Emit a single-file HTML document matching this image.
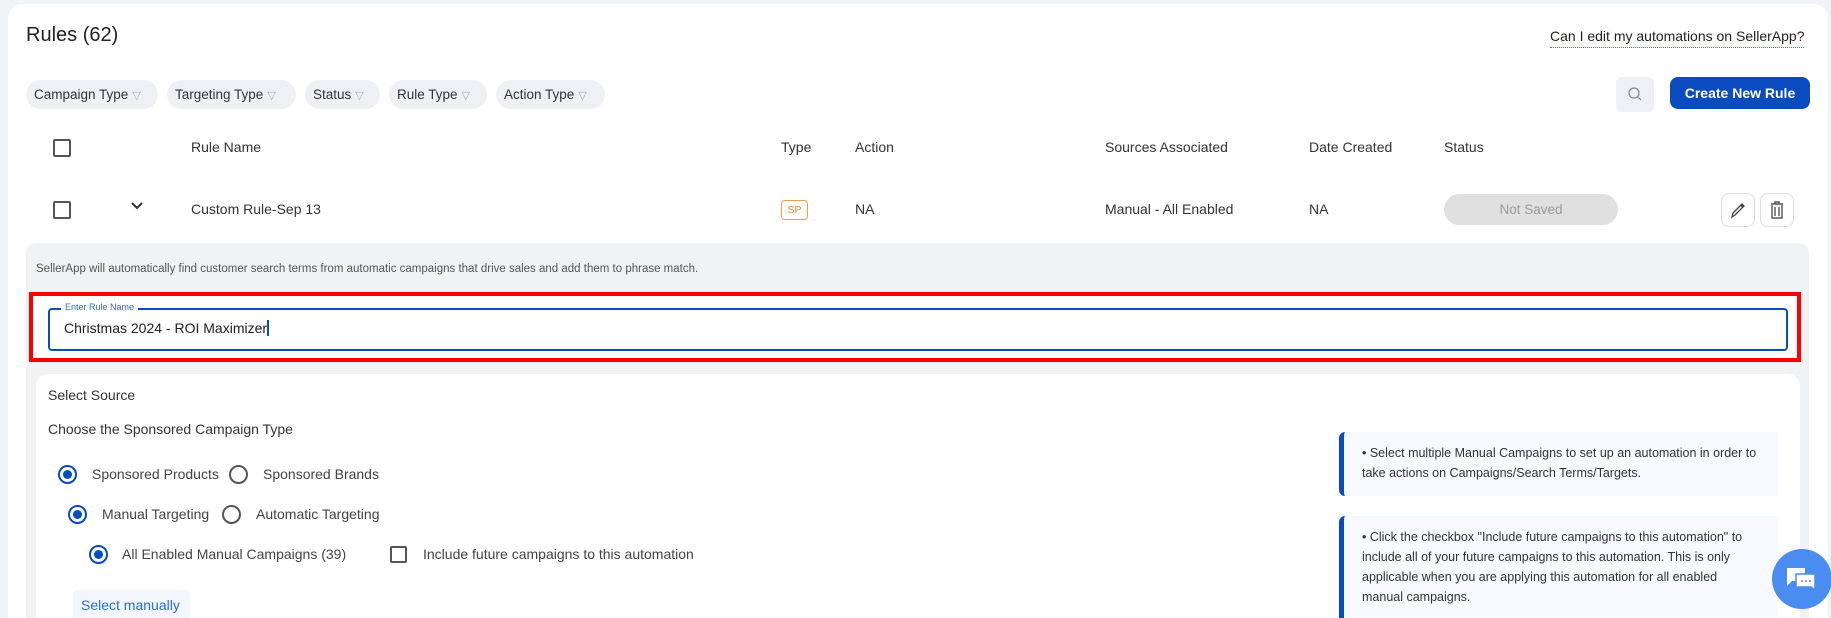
<!DOCTYPE html>
<html><head><meta charset="utf-8"><style>
*{box-sizing:border-box;margin:0;padding:0}
html,body{width:1831px;height:618px;overflow:hidden}
body{background:#f1f3f6;font-family:"Liberation Sans",sans-serif;color:#333;position:relative}
.a{position:absolute;white-space:nowrap}
.card{position:absolute;left:8px;top:4px;width:1820px;height:614px;background:#fff;border-radius:14px 14px 0 0}
.chip{position:absolute;top:80px;height:29px;background:#eff0f3;border-radius:15px;font-size:13.5px;line-height:29px;padding-left:8px;color:#333}
.chip span{color:#aaa;font-size:11px;margin-left:4px}
.cb{position:absolute;width:18px;height:18px;border:2px solid #555;border-radius:2px;background:#fff}
.h{font-size:14px;top:139px}
.r{font-size:14px;top:201px}
.radio{position:absolute;width:19px;height:19px;border-radius:50%;border:2px solid #555;background:#fff}
.radio.on{border-color:#0a4bbf}
.radio.on::after{content:"";position:absolute;left:3px;top:3px;width:9px;height:9px;border-radius:50%;background:#0a4bbf}
.t14{font-size:14px}
.info{position:absolute;background:#f7f9fe;border-left:5px solid #0a4bbf;border-radius:6px 0 0 6px;font-size:12.5px;line-height:20px;padding:11px 20px 0 18px;color:#333;white-space:normal}
</style></head><body>
<div class="card"></div>
<div class="a" style="left:26px;top:24px;font-size:20px;color:#222">Rules (62)</div>
<div class="a" style="left:1550px;top:28px;font-size:14px;color:#222;border-bottom:1px dotted #2a7de1;padding-bottom:3px">Can I edit my automations on SellerApp?</div>

<div class="chip" style="left:26px;width:132px">Campaign Type<span>▽</span></div>
<div class="chip" style="left:167px;width:129px">Targeting Type<span>▽</span></div>
<div class="chip" style="left:305px;width:75px">Status<span>▽</span></div>
<div class="chip" style="left:389px;width:98px">Rule Type<span>▽</span></div>
<div class="chip" style="left:496px;width:109px">Action Type<span>▽</span></div>

<div class="a" style="left:1616px;top:77px;width:38px;height:35px;background:#eff0f3;border-radius:6px">
<svg width="38" height="35" viewBox="0 0 38 35"><circle cx="18" cy="16" r="5" fill="none" stroke="#888" stroke-width="1.2"/><line x1="21.5" y1="19.5" x2="25" y2="23" stroke="#888" stroke-width="1.2"/></svg></div>
<div class="a" style="left:1670px;top:77px;width:140px;height:32px;background:#0a4bbf;border-radius:8px;color:#fff;font-size:14px;font-weight:bold;text-align:center;line-height:32px">Create New Rule</div>

<div class="cb" style="left:53px;top:139px"></div>
<div class="a h" style="left:191px">Rule Name</div>
<div class="a h" style="left:781px">Type</div>
<div class="a h" style="left:855px">Action</div>
<div class="a h" style="left:1105px">Sources Associated</div>
<div class="a h" style="left:1309px">Date Created</div>
<div class="a h" style="left:1444px">Status</div>

<div class="cb" style="left:53px;top:201px"></div>
<svg class="a" style="left:130px;top:201px" width="14" height="10" viewBox="0 0 14 10"><path d="M2 2 L7 7 L12 2" fill="none" stroke="#333" stroke-width="2"/></svg>
<div class="a r" style="left:191px">Custom Rule-Sep 13</div>
<div class="a" style="left:781px;top:200px;width:27px;height:20px;border:1px solid #e8a050;border-radius:4px;color:#e08a30;font-size:10.5px;text-align:center;line-height:18px">SP</div>
<div class="a r" style="left:855px">NA</div>
<div class="a r" style="left:1105px">Manual - All Enabled</div>
<div class="a r" style="left:1309px">NA</div>
<div class="a" style="left:1444px;top:194px;width:174px;height:31px;background:#e0e0e0;border-radius:16px;color:#999;font-size:13.5px;text-align:center;line-height:31px">Not Saved</div>
<div class="a" style="left:1721px;top:193px;width:34px;height:34px;border:1px solid #ddd;border-radius:8px">
<svg width="32" height="32" viewBox="0 0 32 32"><path d="M10 23 L11 19 L20 10 L22 12 L13 21 Z" fill="none" stroke="#444" stroke-width="1.3"/><path d="M19 11 L21 13" stroke="#444" stroke-width="2"/></svg></div>
<div class="a" style="left:1760px;top:193px;width:34px;height:34px;border:1px solid #ddd;border-radius:8px">
<svg width="32" height="32" viewBox="0 0 32 32"><path d="M10 10 H22 M14 10 V8 H18 V10 M11 11 V24 H21 V11 M14 13 V22 M18 13 V22" fill="none" stroke="#555" stroke-width="1.4"/></svg></div>

<div class="a" style="left:26px;top:243px;width:1783px;height:375px;background:#f1f2f4;border-radius:10px 10px 0 0"></div>
<div class="a" style="left:36px;top:263px;font-size:11.5px;color:#555">SellerApp will automatically find customer search terms from automatic campaigns that drive sales and add them to phrase match.</div>
<div class="a" style="left:29px;top:292px;width:1772px;height:70px;border:4px solid #f00;background:#fff"></div>
<div class="a" style="left:48px;top:308px;width:1740px;height:43px;border:2px solid #0a4bbf;border-radius:4px;background:#fff"></div>
<div class="a" style="left:61px;top:302px;font-size:9px;color:#2a6de1;background:#fff;padding:0 4px">Enter Rule Name</div>
<div class="a" style="left:64px;top:320px;font-size:14px;color:#222">Christmas 2024 - ROI Maximizer<span style="display:inline-block;width:2px;height:16px;background:#0a4bbf;vertical-align:-3px"></span></div>

<div class="a" style="left:36px;top:374px;width:1764px;height:244px;background:#fff;border-radius:12px 12px 0 0"></div>
<div class="a t14" style="left:48px;top:387px">Select Source</div>
<div class="a t14" style="left:48px;top:421px">Choose the Sponsored Campaign Type</div>

<div class="radio on" style="left:58px;top:465px"></div>
<div class="a t14" style="left:92px;top:466px;color:#444">Sponsored Products</div>
<div class="radio" style="left:229px;top:465px"></div>
<div class="a t14" style="left:263px;top:466px;color:#444">Sponsored Brands</div>

<div class="radio on" style="left:68px;top:505px"></div>
<div class="a t14" style="left:102px;top:506px;color:#444">Manual Targeting</div>
<div class="radio" style="left:222px;top:505px"></div>
<div class="a t14" style="left:256px;top:506px;color:#444">Automatic Targeting</div>

<div class="radio on" style="left:89px;top:545px"></div>
<div class="a t14" style="left:122px;top:546px;color:#444">All Enabled Manual Campaigns (39)</div>
<div class="cb" style="left:390px;top:546px;width:17px;height:17px"></div>
<div class="a t14" style="left:423px;top:546px;color:#444">Include future campaigns to this automation</div>

<div class="a" style="left:73px;top:590px;width:117px;height:28px;background:#f3f6fc;border-radius:4px 4px 0 0;color:#2a6de1;font-size:14px;line-height:30px;padding-left:8px">Select manually</div>

<div class="info" style="left:1339px;top:432px;width:439px;height:64px">• Select multiple Manual Campaigns to set up an automation in order to take actions on Campaigns/Search Terms/Targets.</div>
<div class="info" style="left:1339px;top:516px;width:439px;height:102px;border-radius:6px 0 0 0">• Click the checkbox "Include future campaigns to this automation" to include all of your future campaigns to this automation. This is only applicable when you are applying this automation for all enabled manual campaigns.</div>

<div class="a" style="left:1772px;top:549px;width:60px;height:60px;border-radius:50%;background:#4a8cf0">
<svg width="60" height="60" viewBox="0 0 60 60"><path d="M15 19 H33 V32 H20 L15 37 Z" fill="#fff"/><path d="M24 25 H43 V41 L39 38 H24 Z" fill="#fff" stroke="#4a8cf0" stroke-width="1.5"/><circle cx="30" cy="32" r="1" fill="#4a8cf0"/><circle cx="34" cy="32" r="1" fill="#4a8cf0"/><circle cx="38" cy="32" r="1" fill="#4a8cf0"/></svg></div>
</body></html>
